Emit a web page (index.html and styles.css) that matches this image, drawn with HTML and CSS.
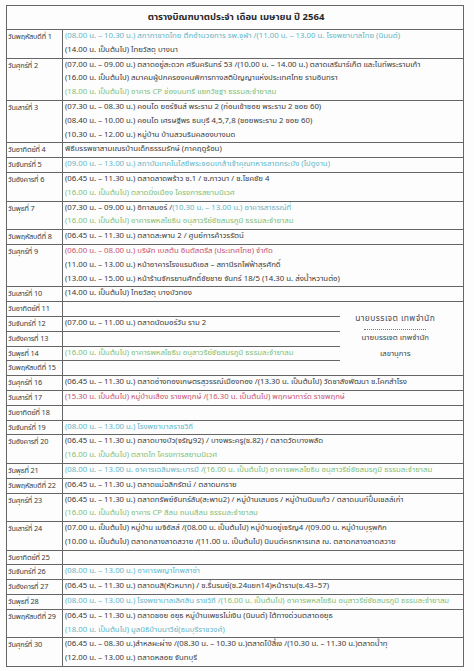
FILE: index.html
```html
<!DOCTYPE html>
<html lang="th">
<head>
<meta charset="utf-8">
<title>ตารางบิณฑบาตประจำ เดือน เมษายน ปี 2564</title>
<link rel="stylesheet" href="styles.css">
</head>
<body>
<div class="page">
<table class="sched">
<colgroup><col class="c-day"><col class="c-main"><col class="c-side"></colgroup>
<tr><th colspan="3" class="title">ตารางบิณฑบาตประจำ เดือน เมษายน ปี 2564</th></tr>
<tr><td class="day">วันพฤหัสบดีที่ 1</td><td colspan="2"><div class="ln teal">(08.00 น. – 10.30 น.) สภากาชาดไทย ตึกอำนวยการ รพ.จุฬา /(11.00 น. – 13.00 น. โรงพยาบาลไทย (นิมนต์)</div><div class="ln">(14.00 น. เป็นต้นไป) ไทยวัสดุ บางนา</div></td></tr>
<tr><td class="day">วันศุกร์ที่ 2</td><td colspan="2"><div class="ln">(07.00 น. – 09.00 น.) ตลาดอยู่สะดวก ศรีนครินทร์ 53 /(10.00 น. – 14.00 น.) ตลาดเสรีมาร์เก็ต และไนท์พระรามเก้า</div><div class="ln">(16.00 น. เป็นต้นไป) สมาคมผู้ปกครองคนพิการทางสติปัญญาแห่งประเทศไทย รามอินทรา</div><div class="ln green">(18.00 น. เป็นต้นไป) อาคาร CP ช่องนนทรี แยกวัชฐา ธรรมละจำยาลม</div></td></tr>
<tr><td class="day">วันเสาร์ที่ 3</td><td colspan="2"><div class="ln">(07.30 น. – 08.30 น.) คอนโด ยอร์จินส์ พระราม 2 (ก่อนเข้าซอย พระราม 2 ซอย 60)</div><div class="ln">(08.40 น. – 10.00 น.) คอนโด เศรษฐีพร ธนบุรี 4,5,7,8 (ซอยพระราม 2 ซอย 60)</div><div class="ln">(10.30 น. – 12.00 น.) หมู่บ้าน บ้านสวนริมคลองบางมด</div></td></tr>
<tr><td class="day">วันอาทิตย์ที่ 4</td><td colspan="2"><div class="ln">พิธีบรรพชาสามเณรบ้านเด็กธรรมรักษ์ (ภาคฤดูร้อน)</div></td></tr>
<tr><td class="day">วันจันทร์ที่ 5</td><td colspan="2"><div class="ln teal">(09.00 น. – 13.00 น.) สถาบันเทคโนโลยีพระจอมเกล้าเจ้าคุณทหารลาดกระบัง (ไปดูงาน)</div></td></tr>
<tr><td class="day">วันอังคารที่ 6</td><td colspan="2"><div class="ln">(06.45 น. – 11.30 น.) ตลาดลาดพร้าว ซ.1 / ซ.ภาวนา / ซ.โชคชัย 4</div><div class="ln green">(16.00 น. เป็นต้นไป) ตลาดมิ่งเมือง โครงการสยามนิเวศ</div></td></tr>
<tr><td class="day">วันพุธที่ 7</td><td colspan="2"><div class="ln">(07.30 น. – 09.00 น.) อิทาลมอร์ /<span class="teal">(10.30 น. – 13.00 น.) อาคารสาธรณ์ที่</span></div><div class="ln green">(16.00 น. เป็นต้นไป) อาคารพหลโยธิน อนุสาวรีย์ชัยสมรภูมิ ธรรมละจำยาลม</div></td></tr>
<tr><td class="day">วันพฤหัสบดีที่ 8</td><td colspan="2"><div class="ln">(06.45 น. – 11.30 น.) ตลาดสะพาน 2 / ศูนย์การค้าวรรัตน์</div></td></tr>
<tr><td class="day">วันศุกร์ที่ 9</td><td colspan="2"><div class="ln pink">(06.00 น. – 08.00 น.) บริษัท เบลต้น อินดัสตรีส (ประเทศไทย) จำกัด</div><div class="ln">(11.00 น. – 13.00 น.) หน้าอาคารโรงแรมดิเอส – สถานีรถไฟฟ้าสุรศักดิ์</div><div class="ln">(13.00 น. – 15.00 น.) หน้าร้านจักรยานศักดิ์ชัยชาย จันทร์ 18/5 (14.30 น. ส่งน้ำหวานต่อ)</div></td></tr>
<tr><td class="day">วันเสาร์ที่ 10</td><td colspan="2"><div class="ln">(14.00 น. เป็นต้นไป) ไทยวัสดุ บางบัวทอง</div></td></tr>
<tr><td class="day">วันอาทิตย์ที่ 11</td><td class="open">&nbsp;</td><td class="sig" rowspan="5"><div class="sign">นายบรรเจต เทพจำนัก</div><div class="dots"></div><div class="name">นายบรรเจต เทพจำนัก</div><div class="role">เลขานุการ</div></td></tr>
<tr><td class="day">วันจันทร์ที่ 12</td><td class="open"><div class="ln">(07.00 น. – 11.00 น.) ตลาดนัดมอร์วัน ราม 2</div></td></tr>
<tr><td class="day">วันอังคารที่ 13</td><td class="open">&nbsp;</td></tr>
<tr><td class="day">วันพุธที่ 14</td><td class="open"><div class="ln green">(16.00 น. เป็นต้นไป) อาคารพหลโยธิน อนุสาวรีย์ชัยสมรภูมิ ธรรมละจำยาลม</div></td></tr>
<tr><td class="day">วันพฤหัสบดีที่ 15</td><td class="open">&nbsp;</td></tr>
<tr><td class="day">วันศุกร์ที่ 16</td><td colspan="2"><div class="ln">(06.45 น. – 11.30 น.) ตลาดอ่างทองเกษตรสุวรรณ์เมืองทอง /(13.30 น. เป็นต้นไป) วัดชาลังพัฒนา ซ.โคกสำโรง</div></td></tr>
<tr><td class="day">วันเสาร์ที่ 17</td><td colspan="2"><div class="ln pink">(15.30 น. เป็นต้นไป) หมู่บ้านเสือง ราชพฤกษ์ /(16.30 น. เป็นต้นไป) พฤกษาการ์ด ราชพฤกษ์</div></td></tr>
<tr><td class="day">วันอาทิตย์ที่ 18</td><td colspan="2">&nbsp;</td></tr>
<tr><td class="day">วันจันทร์ที่ 19</td><td colspan="2"><div class="ln teal">(08.00 น. – 13.00 น.) โรงพยาบาลราชวิถี</div></td></tr>
<tr><td class="day">วันอังคารที่ 20</td><td colspan="2"><div class="ln">(06.45 น. – 11.30 น.) ตลาดบางบัว(จรัญ92) / บางพระครู(ซ.82) / ตลาดวัดบางพลัด</div><div class="ln green">(16.00 น. เป็นต้นไป) ตลาดไท โครงการสยามนิเวศ</div></td></tr>
<tr><td class="day">วันพุธที่ 21</td><td colspan="2"><div class="ln teal">(08.00 น. – 13.00 น. อาคารเฉลิมพระบารมี /<span class="green">(16.00 น. เป็นต้นไป) อาคารพหลโยธิน อนุสาวรีย์ชัยสมรภูมิ ธรรมละจำยาลม</span></div></td></tr>
<tr><td class="day">วันพฤหัสบดีที่ 22</td><td colspan="2"><div class="ln">(06.45 น. – 11.30 น.) ตลาดแม่ฉลิกรัตน์ / ตลาดมกราย</div></td></tr>
<tr><td class="day">วันศุกร์ที่ 23</td><td colspan="2"><div class="ln">(06.45 น. – 11.30 น.) ตลาดทรัพย์จันทร์ลัน(สะพาน2) / หมู่บ้านเสนอร / หมู่บ้านนิมแก้ว / ตลาดนนท์ปั้มเชลล์เก่า</div><div class="ln green">(16.00 น. เป็นต้นไป) อาคาร CP สีลม ถนนสีลม ธรรมละจำยาลม</div></td></tr>
<tr><td class="day">วันเสาร์ที่ 24</td><td colspan="2"><div class="ln">(07.00 น. เป็นต้นไป) หมู่บ้าน เมจิอัสส์ /(08.00 น. เป็นต้นไป) หมู่บ้านอยู่เจริญ4 /(09.00 น. หมู่บ้านบุรุพกิก</div><div class="ln">(10.00 น. เป็นต้นไป) ตลาดกลางลาดสวาย /(11.00 น. เป็นต้นไป) นิมนต์ครทหารเทส ณ. ตลาดกลางลาดสวาย</div></td></tr>
<tr><td class="day">วันอาทิตย์ที่ 25</td><td colspan="2">&nbsp;</td></tr>
<tr><td class="day">วันจันทร์ที่ 26</td><td colspan="2"><div class="ln teal">(08.00 น. – 13.00 น.) อาคารพญาไทพลาซ่า</div></td></tr>
<tr><td class="day">วันอังคารที่ 27</td><td colspan="2"><div class="ln">(06.45 น. – 11.30 น.) ตลาดนสิ(หัวหมาก) / ซ.รื่นรมย์(ซ.24แยก14)หน้าราม(ซ.43–57)</div></td></tr>
<tr><td class="day">วันพุธที่ 28</td><td colspan="2"><div class="ln teal">(08.00 น. – 13.00 น.) โรงพยาบาลเลิศสิน ราชวิถี /<span class="green">(16.00 น. เป็นต้นไป) อาคารพหลโยธิน อนุสาวรีย์ชัยสมรภูมิ ธรรมละจำยาลม</span></div></td></tr>
<tr><td class="day">วันพฤหัสบดีที่ 29</td><td colspan="2"><div class="ln">(06.45 น. – 11.30 น.) ตลาดซอย อยุธ หมู่บ้านเพชรไม่เงิน (นิมนต์) ใต้ทางด่วนตลาดอยุธ</div><div class="ln teal">(18.00 น. เป็นต้นไป) มูลนิธิบ้านนาวีย์(ธนบุรีราชวงศ์)</div></td></tr>
<tr><td class="day">วันศุกร์ที่ 30</td><td colspan="2"><div class="ln">(06.45 น. – 08.30 น.)สำหลผะผ่าง /(08.30 น. – 10.30 น.)ตลาดโบ๊ลี้เง /(10.30 น. – 11.30 น.)ตลาดน้ำทุ</div><div class="ln">(12.00 น. – 13.00 น.) ตลาดหลอย จันทบุรี</div></td></tr>
</table>
</div>
</body>
</html>
```

FILE: styles.css
```css
html, body {
  margin: 0;
  padding: 0;
  background: #fdfdfd;
}
.page {
  padding: 5px 0 0 6px;
}
.sched {
  width: 457px;
  table-layout: fixed;
  border-collapse: collapse;
  font-family: "Tahoma", "Noto Sans Thai", "Noto Sans", "DejaVu Sans", sans-serif;
  font-size: 7.8px;
  line-height: 13.8px;
  color: #3a3a3a;
}
.c-day { width: 56px; }
.c-main { width: 277px; }
.c-side { width: 124px; }
.sched th, .sched td {
  border: 1px solid #666;
  padding: 0 0 0 2px;
  vertical-align: top;
  text-align: left;
  white-space: nowrap;
  overflow: hidden;
}
.sched th.title {
  height: 23px;
  text-align: center;
  vertical-align: middle;
  font-weight: bold;
  font-size: 9.5px;
  color: #2a2a2a;
}
.sched td.day {
  padding-left: 1px;
  font-size: 7.3px;
  letter-spacing: -0.15px;
}
.ln { height: 13.8px; }
.teal { color: #62b6c8; }
.green { color: #7dbd78; }
.pink { color: #c85472; }
.sched td.open {
  border-right: none;
}
.sched td.sig {
  border-left: none;
  vertical-align: top;
  padding: 11px 12px 0 0;
  color: #444;
}
.sig > div {
  text-align: center;
}
.sign {
  height: 12px;
  line-height: 12px;
  font-size: 8.5px;
  letter-spacing: 0.4px;
  color: #4a4a5a;
}
.dots {
  width: 62px;
  height: 0;
  margin: 4px auto 3px;
  border-top: 1px dotted #777;
}
.name {
  height: 11px;
  line-height: 11px;
}
.role {
  height: 11px;
  line-height: 11px;
  margin-top: 5px;
}
```
